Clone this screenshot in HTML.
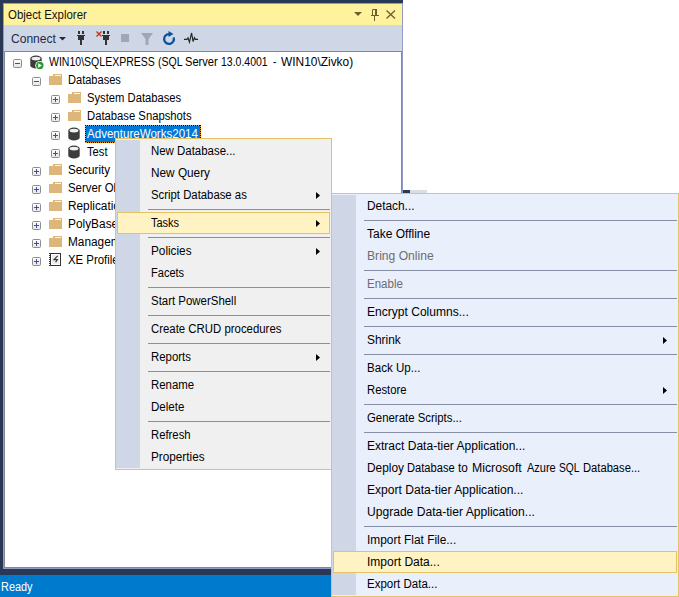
<!DOCTYPE html>
<html><head><meta charset="utf-8"><style>
html,body{margin:0;padding:0;width:679px;height:597px;overflow:hidden;background:#fff;position:relative}
.t{position:absolute;font-family:"Liberation Sans", sans-serif;font-size:12px;line-height:18px;white-space:pre}
svg{display:block}
</style></head><body>
<div style="position:absolute;left:0;top:0;width:403px;height:575px;background:#293955"></div>
<div style="position:absolute;left:3px;top:3px;width:400px;height:566px;background:#909CC6"></div>
<div style="position:absolute;left:4px;top:4px;width:398px;height:21px;background:#FFF29D"></div>
<div class="t" style="left:8px;top:6px;color:#141414;transform:scaleX(0.9530);transform-origin:0 0;">Object Explorer</div>
<svg style="position:absolute;left:354px;top:11px" width="9" height="6"><path d="M0,1 H8 L4,5 Z" fill="#6F5B34"/></svg>
<svg style="position:absolute;left:371px;top:9px" width="8" height="12"><path d="M1.5,0.5 H5.5 V6" stroke="#6F5B34" stroke-width="1" fill="none"/><path d="M1.5,0.5 V6" stroke="#6F5B34" stroke-width="1" fill="none"/><rect x="4" y="0" width="2" height="6" fill="#6F5B34"/><rect x="0" y="6" width="8" height="1" fill="#6F5B34"/><rect x="3" y="7" width="1" height="5" fill="#6F5B34"/></svg>
<svg style="position:absolute;left:386px;top:10px" width="10" height="9"><path d="M0.5,0.5 L9,8.5 M9,0.5 L0.5,8.5" stroke="#6F5B34" stroke-width="1.3" fill="none"/></svg>
<div style="position:absolute;left:4px;top:25px;width:398px;height:26px;background:#CFD6E5"></div>
<div class="t" style="left:11px;top:30px;color:#1E2A48;transform:scaleX(1.0045);transform-origin:0 0;">Connect</div>
<svg style="position:absolute;left:59px;top:37px" width="7" height="4"><path d="M0,0 H7 L3.5,3.5 Z" fill="#1E2A48"/></svg>
<svg style="position:absolute;left:77px;top:31px" width="9" height="14"><path d="M1,0 h2 v3 h-2 z M5,0 h2 v3 h-2 z M0,4 h8 v1 h-1 v4 h-2 v5 h-2 v-5 h-2 v-4 h-1 z" fill="#333"/></svg>
<svg style="position:absolute;left:102px;top:31px" width="9" height="14"><path d="M1,0 h2 v3 h-2 z M5,0 h2 v3 h-2 z M0,4 h8 v1 h-1 v4 h-2 v5 h-2 v-5 h-2 v-4 h-1 z" fill="#333"/></svg>
<svg style="position:absolute;left:96px;top:31px" width="7" height="7"><path d="M0.5,0.5 L5.5,5.5 M5.5,0.5 L0.5,5.5" stroke="#C4321A" stroke-width="1.3"/></svg>
<div style="position:absolute;left:121px;top:34px;width:8px;height:8px;background:#A1A6B3"></div>
<svg style="position:absolute;left:141px;top:33px" width="13" height="13"><path d="M0,0 H12 L7.5,6 V12 H4.5 V6 Z" fill="#A1A6B3"/></svg>
<svg style="position:absolute;left:162px;top:31px" width="15" height="15"><path d="M7,3.1 A4.9,4.9 0 1 0 11.6,6.3" stroke="#0A539E" stroke-width="2.3" fill="none"/><path d="M6.5,0 L11.5,3 L6.5,6 Z" fill="#0A539E"/></svg>
<svg style="position:absolute;left:184px;top:32px" width="15" height="12"><path d="M0,7.3 H3 L4,5.8 L5.4,10.2 L7.6,1 L9.1,9.6 L10.4,5.6 L11.4,7.3 H14" stroke="#262626" stroke-width="1.15" fill="none"/></svg>
<div style="position:absolute;left:4px;top:51px;width:398px;height:517px;background:#80889A"></div>
<div style="position:absolute;left:5px;top:52px;width:396px;height:515px;background:#FFFFFF"></div>
<svg style="position:absolute;left:13px;top:59px" width="9" height="9"><defs><linearGradient id="g" x1="0" y1="0" x2="0" y2="1"><stop offset="0" stop-color="#fff"/><stop offset="1" stop-color="#E4E4E4"/></linearGradient></defs><rect x="0.5" y="0.5" width="8" height="8" rx="1" fill="url(#g)" stroke="#8C8C8C"/><path d="M2,4.5 H7" stroke="#3B4FA2" stroke-width="1"/></svg>
<svg style="position:absolute;left:30px;top:55px" width="15" height="15"><path d="M0.3,3.5 V10.5 A5.7,3 0 0 0 11.7,10.5 V3.5 A5.7,3 0 0 0 0.3,3.5 Z" fill="#3C3C3C"/><ellipse cx="6" cy="3.6" rx="4.5" ry="1.9" fill="#F0F0F0"/><circle cx="9.8" cy="10.5" r="4.6" fill="#fff"/><circle cx="9.8" cy="10.5" r="3.7" fill="#23992A"/><path d="M8.2,8.3 L12,10.5 L8.2,12.7 Z" fill="#fff"/></svg>
<div class="t" style="left:49.10px;top:53px;color:#000;transform:scaleX(0.8767);transform-origin:0 0">WIN10\SQLEXPRESS</div>
<div class="t" style="left:157.62px;top:53px;color:#000;transform:scaleX(0.8778);transform-origin:0 0">(SQL</div>
<div class="t" style="left:185.37px;top:53px;color:#000;transform:scaleX(0.9265);transform-origin:0 0">Server</div>
<div class="t" style="left:221.03px;top:53px;color:#000;transform:scaleX(0.8731);transform-origin:0 0">13.0.4001</div>
<div class="t" style="left:272.80px;top:53px;color:#000;transform:scaleX(0.8250);transform-origin:0 0">-</div>
<div class="t" style="left:280.70px;top:53px;color:#000;transform:scaleX(0.9931);transform-origin:0 0">WIN10\Zivko)</div>
<svg style="position:absolute;left:32px;top:77px" width="9" height="9"><defs><linearGradient id="g" x1="0" y1="0" x2="0" y2="1"><stop offset="0" stop-color="#fff"/><stop offset="1" stop-color="#E4E4E4"/></linearGradient></defs><rect x="0.5" y="0.5" width="8" height="8" rx="1" fill="url(#g)" stroke="#8C8C8C"/><path d="M2,4.5 H7" stroke="#3B4FA2" stroke-width="1"/></svg>
<svg style="position:absolute;left:49px;top:74px" width="13" height="11"><path d="M4,0 H13 V11 H0 V2 H4 Z" fill="#DCB67A"/><path d="M6,1.5 H12" stroke="#FFF6E6" stroke-width="1"/></svg>
<div class="t" style="left:68px;top:71px;color:#000;transform:scaleX(0.9214);transform-origin:0 0;">Databases</div>
<svg style="position:absolute;left:51px;top:95px" width="9" height="9"><defs><linearGradient id="g" x1="0" y1="0" x2="0" y2="1"><stop offset="0" stop-color="#fff"/><stop offset="1" stop-color="#E4E4E4"/></linearGradient></defs><rect x="0.5" y="0.5" width="8" height="8" rx="1" fill="url(#g)" stroke="#8C8C8C"/><path d="M2,4.5 H7 M4.5,2 V7" stroke="#3B4FA2" stroke-width="1"/></svg>
<svg style="position:absolute;left:68px;top:92px" width="13" height="11"><path d="M4,0 H13 V11 H0 V2 H4 Z" fill="#DCB67A"/><path d="M6,1.5 H12" stroke="#FFF6E6" stroke-width="1"/></svg>
<div class="t" style="left:87px;top:89px;color:#000;transform:scaleX(0.9354);transform-origin:0 0;">System Databases</div>
<svg style="position:absolute;left:51px;top:113px" width="9" height="9"><defs><linearGradient id="g" x1="0" y1="0" x2="0" y2="1"><stop offset="0" stop-color="#fff"/><stop offset="1" stop-color="#E4E4E4"/></linearGradient></defs><rect x="0.5" y="0.5" width="8" height="8" rx="1" fill="url(#g)" stroke="#8C8C8C"/><path d="M2,4.5 H7 M4.5,2 V7" stroke="#3B4FA2" stroke-width="1"/></svg>
<svg style="position:absolute;left:68px;top:110px" width="13" height="11"><path d="M4,0 H13 V11 H0 V2 H4 Z" fill="#DCB67A"/><path d="M6,1.5 H12" stroke="#FFF6E6" stroke-width="1"/></svg>
<div class="t" style="left:87px;top:107px;color:#000;transform:scaleX(0.9391);transform-origin:0 0;">Database Snapshots</div>
<svg style="position:absolute;left:51px;top:131px" width="9" height="9"><defs><linearGradient id="g" x1="0" y1="0" x2="0" y2="1"><stop offset="0" stop-color="#fff"/><stop offset="1" stop-color="#E4E4E4"/></linearGradient></defs><rect x="0.5" y="0.5" width="8" height="8" rx="1" fill="url(#g)" stroke="#8C8C8C"/><path d="M2,4.5 H7 M4.5,2 V7" stroke="#3B4FA2" stroke-width="1"/></svg>
<svg style="position:absolute;left:68px;top:127px" width="12" height="14"><path d="M0.3,3.5 V10.5 A5.7,3 0 0 0 11.7,10.5 V3.5 A5.7,3 0 0 0 0.3,3.5 Z" fill="#3C3C3C"/><ellipse cx="6" cy="3.6" rx="4.5" ry="1.9" fill="#F0F0F0"/></svg>
<div style="position:absolute;left:85px;top:125px;width:116px;height:18px;background:#0078D7"></div>
<div style="position:absolute;left:85px;top:125px;width:116px;height:1px;background:repeating-linear-gradient(90deg,#000 0 1px,#F7931E 1px 2px)"></div>
<div style="position:absolute;left:85px;top:142px;width:116px;height:1px;background:repeating-linear-gradient(90deg,#000 0 1px,#F7931E 1px 2px)"></div>
<div style="position:absolute;left:85px;top:125px;width:1px;height:18px;background:repeating-linear-gradient(180deg,#000 0 1px,#F7931E 1px 2px)"></div>
<div style="position:absolute;left:200px;top:125px;width:1px;height:18px;background:repeating-linear-gradient(180deg,#000 0 1px,#F7931E 1px 2px)"></div>
<div class="t" style="left:87px;top:125px;color:#FFFFFF;transform:scaleX(0.9635);transform-origin:0 0;">AdventureWorks2014</div>
<svg style="position:absolute;left:51px;top:149px" width="9" height="9"><defs><linearGradient id="g" x1="0" y1="0" x2="0" y2="1"><stop offset="0" stop-color="#fff"/><stop offset="1" stop-color="#E4E4E4"/></linearGradient></defs><rect x="0.5" y="0.5" width="8" height="8" rx="1" fill="url(#g)" stroke="#8C8C8C"/><path d="M2,4.5 H7 M4.5,2 V7" stroke="#3B4FA2" stroke-width="1"/></svg>
<svg style="position:absolute;left:68px;top:145px" width="12" height="14"><path d="M0.3,3.5 V10.5 A5.7,3 0 0 0 11.7,10.5 V3.5 A5.7,3 0 0 0 0.3,3.5 Z" fill="#3C3C3C"/><ellipse cx="6" cy="3.6" rx="4.5" ry="1.9" fill="#F0F0F0"/></svg>
<div class="t" style="left:87px;top:143px;color:#000;transform:scaleX(0.9318);transform-origin:0 0;">Test</div>
<svg style="position:absolute;left:32px;top:167px" width="9" height="9"><defs><linearGradient id="g" x1="0" y1="0" x2="0" y2="1"><stop offset="0" stop-color="#fff"/><stop offset="1" stop-color="#E4E4E4"/></linearGradient></defs><rect x="0.5" y="0.5" width="8" height="8" rx="1" fill="url(#g)" stroke="#8C8C8C"/><path d="M2,4.5 H7 M4.5,2 V7" stroke="#3B4FA2" stroke-width="1"/></svg>
<svg style="position:absolute;left:49px;top:164px" width="13" height="11"><path d="M4,0 H13 V11 H0 V2 H4 Z" fill="#DCB67A"/><path d="M6,1.5 H12" stroke="#FFF6E6" stroke-width="1"/></svg>
<div class="t" style="left:68px;top:161px;color:#000;transform:scaleX(0.9700);transform-origin:0 0;">Security</div>
<svg style="position:absolute;left:32px;top:185px" width="9" height="9"><defs><linearGradient id="g" x1="0" y1="0" x2="0" y2="1"><stop offset="0" stop-color="#fff"/><stop offset="1" stop-color="#E4E4E4"/></linearGradient></defs><rect x="0.5" y="0.5" width="8" height="8" rx="1" fill="url(#g)" stroke="#8C8C8C"/><path d="M2,4.5 H7 M4.5,2 V7" stroke="#3B4FA2" stroke-width="1"/></svg>
<svg style="position:absolute;left:49px;top:182px" width="13" height="11"><path d="M4,0 H13 V11 H0 V2 H4 Z" fill="#DCB67A"/><path d="M6,1.5 H12" stroke="#FFF6E6" stroke-width="1"/></svg>
<div class="t" style="left:68px;top:179px;color:#000;transform:scaleX(0.9500);transform-origin:0 0;">Server Objects</div>
<svg style="position:absolute;left:32px;top:203px" width="9" height="9"><defs><linearGradient id="g" x1="0" y1="0" x2="0" y2="1"><stop offset="0" stop-color="#fff"/><stop offset="1" stop-color="#E4E4E4"/></linearGradient></defs><rect x="0.5" y="0.5" width="8" height="8" rx="1" fill="url(#g)" stroke="#8C8C8C"/><path d="M2,4.5 H7 M4.5,2 V7" stroke="#3B4FA2" stroke-width="1"/></svg>
<svg style="position:absolute;left:49px;top:200px" width="13" height="11"><path d="M4,0 H13 V11 H0 V2 H4 Z" fill="#DCB67A"/><path d="M6,1.5 H12" stroke="#FFF6E6" stroke-width="1"/></svg>
<div class="t" style="left:68px;top:197px;color:#000;transform:scaleX(0.9850);transform-origin:0 0;">Replication</div>
<svg style="position:absolute;left:32px;top:221px" width="9" height="9"><defs><linearGradient id="g" x1="0" y1="0" x2="0" y2="1"><stop offset="0" stop-color="#fff"/><stop offset="1" stop-color="#E4E4E4"/></linearGradient></defs><rect x="0.5" y="0.5" width="8" height="8" rx="1" fill="url(#g)" stroke="#8C8C8C"/><path d="M2,4.5 H7 M4.5,2 V7" stroke="#3B4FA2" stroke-width="1"/></svg>
<svg style="position:absolute;left:49px;top:218px" width="13" height="11"><path d="M4,0 H13 V11 H0 V2 H4 Z" fill="#DCB67A"/><path d="M6,1.5 H12" stroke="#FFF6E6" stroke-width="1"/></svg>
<div class="t" style="left:68px;top:215px;color:#000;transform:scaleX(0.9900);transform-origin:0 0;">PolyBase</div>
<svg style="position:absolute;left:32px;top:239px" width="9" height="9"><defs><linearGradient id="g" x1="0" y1="0" x2="0" y2="1"><stop offset="0" stop-color="#fff"/><stop offset="1" stop-color="#E4E4E4"/></linearGradient></defs><rect x="0.5" y="0.5" width="8" height="8" rx="1" fill="url(#g)" stroke="#8C8C8C"/><path d="M2,4.5 H7 M4.5,2 V7" stroke="#3B4FA2" stroke-width="1"/></svg>
<svg style="position:absolute;left:49px;top:236px" width="13" height="11"><path d="M4,0 H13 V11 H0 V2 H4 Z" fill="#DCB67A"/><path d="M6,1.5 H12" stroke="#FFF6E6" stroke-width="1"/></svg>
<div class="t" style="left:68px;top:233px;color:#000;transform:scaleX(0.9850);transform-origin:0 0;">Management</div>
<svg style="position:absolute;left:32px;top:257px" width="9" height="9"><defs><linearGradient id="g" x1="0" y1="0" x2="0" y2="1"><stop offset="0" stop-color="#fff"/><stop offset="1" stop-color="#E4E4E4"/></linearGradient></defs><rect x="0.5" y="0.5" width="8" height="8" rx="1" fill="url(#g)" stroke="#8C8C8C"/><path d="M2,4.5 H7 M4.5,2 V7" stroke="#3B4FA2" stroke-width="1"/></svg>
<svg style="position:absolute;left:49px;top:253px" width="12" height="13"><rect x="1" y="0" width="11" height="13" fill="#333"/><rect x="2" y="1" width="9" height="11" fill="#fff"/><rect x="3" y="2" width="7" height="9" fill="#EDEDED"/><rect x="0" y="0" width="1" height="1" fill="#333"/><rect x="0" y="2" width="1" height="1" fill="#333"/><rect x="0" y="4" width="1" height="1" fill="#333"/><rect x="0" y="6" width="1" height="1" fill="#333"/><rect x="0" y="8" width="1" height="1" fill="#333"/><rect x="0" y="10" width="1" height="1" fill="#333"/><rect x="0" y="12" width="1" height="1" fill="#333"/><path d="M8.6,2.8 L5,6.6 H8.4 L6.6,9.2" stroke="#333" stroke-width="1.1" fill="none"/></svg>
<div class="t" style="left:68px;top:251px;color:#000;transform:scaleX(0.9500);transform-origin:0 0;">XE Profiler</div>
<div style="position:absolute;left:403px;top:190px;width:7px;height:3px;background:#293955"></div>
<div style="position:absolute;left:410px;top:190px;width:17px;height:3px;background:#DADDE4"></div>
<div style="position:absolute;left:0;top:575px;width:679px;height:22px;background:#007ACC"></div>
<div class="t" style="left:1px;top:578px;color:#FFFFFF;transform:scaleX(0.9088);transform-origin:0 0;">Ready</div>
<div style="position:absolute;left:115px;top:138px;width:215px;height:330px;border:1px solid #E5C365;background:#F0F0F0"></div>
<div style="position:absolute;left:116px;top:140px;width:24px;height:328px;background:#CFD6E5"></div>
<div class="t" style="left:151px;top:142px;color:#000;transform:scaleX(0.9529);transform-origin:0 0;">New Database...</div>
<div class="t" style="left:151px;top:164px;color:#000;transform:scaleX(0.9831);transform-origin:0 0;">New Query</div>
<div class="t" style="left:151px;top:186px;color:#000;transform:scaleX(0.9450);transform-origin:0 0;">Script Database as</div>
<svg style="position:absolute;left:316px;top:192px" width="5" height="8"><path d="M0,0 L4,3.5 L0,7 Z" fill="#000"/></svg>
<div style="position:absolute;left:148px;top:209px;width:182px;height:1px;background:#878FA6"></div>
<div style="position:absolute;left:117px;top:212px;width:211px;height:20px;border:1px solid #E5C365;background:#FFF3C4"></div>
<div class="t" style="left:151px;top:214px;color:#000;transform:scaleX(0.9167);transform-origin:0 0;">Tasks</div>
<svg style="position:absolute;left:316px;top:220px" width="5" height="8"><path d="M0,0 L4,3.5 L0,7 Z" fill="#000"/></svg>
<div style="position:absolute;left:148px;top:237px;width:182px;height:1px;background:#878FA6"></div>
<div class="t" style="left:151px;top:242px;color:#000;transform:scaleX(0.9800);transform-origin:0 0;">Policies</div>
<svg style="position:absolute;left:316px;top:248px" width="5" height="8"><path d="M0,0 L4,3.5 L0,7 Z" fill="#000"/></svg>
<div class="t" style="left:151px;top:264px;color:#000;transform:scaleX(0.9200);transform-origin:0 0;">Facets</div>
<div style="position:absolute;left:148px;top:287px;width:182px;height:1px;background:#878FA6"></div>
<div class="t" style="left:151px;top:292px;color:#000;transform:scaleX(0.9534);transform-origin:0 0;">Start PowerShell</div>
<div style="position:absolute;left:148px;top:315px;width:182px;height:1px;background:#878FA6"></div>
<div class="t" style="left:151px;top:320px;color:#000;transform:scaleX(0.9493);transform-origin:0 0;">Create CRUD procedures</div>
<div style="position:absolute;left:148px;top:343px;width:182px;height:1px;background:#878FA6"></div>
<div class="t" style="left:151px;top:348px;color:#000;transform:scaleX(0.9488);transform-origin:0 0;">Reports</div>
<svg style="position:absolute;left:316px;top:354px" width="5" height="8"><path d="M0,0 L4,3.5 L0,7 Z" fill="#000"/></svg>
<div style="position:absolute;left:148px;top:371px;width:182px;height:1px;background:#878FA6"></div>
<div class="t" style="left:151px;top:376px;color:#000;transform:scaleX(0.9523);transform-origin:0 0;">Rename</div>
<div class="t" style="left:151px;top:398px;color:#000;transform:scaleX(0.9606);transform-origin:0 0;">Delete</div>
<div style="position:absolute;left:148px;top:421px;width:182px;height:1px;background:#878FA6"></div>
<div class="t" style="left:151px;top:426px;color:#000;transform:scaleX(0.9425);transform-origin:0 0;">Refresh</div>
<div class="t" style="left:151px;top:448px;color:#000;transform:scaleX(0.9792);transform-origin:0 0;">Properties</div>
<div style="position:absolute;left:331px;top:193px;width:346px;height:402px;border:1px solid #E5C365;background:#EAEFFC"></div>
<div style="position:absolute;left:332px;top:195px;width:24px;height:400px;background:#CFD6E5"></div>
<div class="t" style="left:367px;top:197px;color:#000;transform:scaleX(0.9891);transform-origin:0 0;">Detach...</div>
<div style="position:absolute;left:364px;top:220px;width:313px;height:1px;background:#878FA6"></div>
<div class="t" style="left:367px;top:225px;color:#000;transform:scaleX(1.0000);transform-origin:0 0;">Take Offline</div>
<div class="t" style="left:367px;top:247px;color:#6D6D6D;transform:scaleX(1.0108);transform-origin:0 0;">Bring Online</div>
<div style="position:absolute;left:364px;top:270px;width:313px;height:1px;background:#878FA6"></div>
<div class="t" style="left:367px;top:275px;color:#6D6D6D;transform:scaleX(0.9611);transform-origin:0 0;">Enable</div>
<div style="position:absolute;left:364px;top:298px;width:313px;height:1px;background:#878FA6"></div>
<div class="t" style="left:367px;top:303px;color:#000;transform:scaleX(1.0040);transform-origin:0 0;">Encrypt Columns...</div>
<div style="position:absolute;left:364px;top:326px;width:313px;height:1px;background:#878FA6"></div>
<div class="t" style="left:367px;top:331px;color:#000;transform:scaleX(0.9909);transform-origin:0 0;">Shrink</div>
<svg style="position:absolute;left:663px;top:337px" width="5" height="8"><path d="M0,0 L4,3.5 L0,7 Z" fill="#000"/></svg>
<div style="position:absolute;left:364px;top:354px;width:313px;height:1px;background:#878FA6"></div>
<div class="t" style="left:367px;top:359px;color:#000;transform:scaleX(0.9642);transform-origin:0 0;">Back Up...</div>
<div class="t" style="left:367px;top:381px;color:#000;transform:scaleX(0.9415);transform-origin:0 0;">Restore</div>
<svg style="position:absolute;left:663px;top:387px" width="5" height="8"><path d="M0,0 L4,3.5 L0,7 Z" fill="#000"/></svg>
<div style="position:absolute;left:364px;top:404px;width:313px;height:1px;background:#878FA6"></div>
<div class="t" style="left:367px;top:409px;color:#000;transform:scaleX(0.9490);transform-origin:0 0;">Generate Scripts...</div>
<div style="position:absolute;left:364px;top:432px;width:313px;height:1px;background:#878FA6"></div>
<div class="t" style="left:367px;top:437px;color:#000;transform:scaleX(1.0019);transform-origin:0 0;">Extract Data-tier Application...</div>
<div class="t" style="left:366.71px;top:459px;color:#000;transform:scaleX(0.9889);transform-origin:0 0">Deploy</div>
<div class="t" style="left:406.77px;top:459px;color:#000;transform:scaleX(0.9280);transform-origin:0 0">Database</div>
<div class="t" style="left:458.20px;top:459px;color:#000;transform:scaleX(0.9800);transform-origin:0 0">to</div>
<div class="t" style="left:472.18px;top:459px;color:#000;transform:scaleX(1.0208);transform-origin:0 0">Microsoft</div>
<div class="t" style="left:526.90px;top:459px;color:#000;transform:scaleX(0.9161);transform-origin:0 0">Azure</div>
<div class="t" style="left:559.05px;top:459px;color:#000;transform:scaleX(0.8522);transform-origin:0 0">SQL</div>
<div class="t" style="left:583.17px;top:459px;color:#000;transform:scaleX(0.9322);transform-origin:0 0">Database...</div>
<div class="t" style="left:367px;top:481px;color:#000;transform:scaleX(1.0065);transform-origin:0 0;">Export Data-tier Application...</div>
<div class="t" style="left:367px;top:503px;color:#000;transform:scaleX(1.0067);transform-origin:0 0;">Upgrade Data-tier Application...</div>
<div style="position:absolute;left:364px;top:526px;width:313px;height:1px;background:#878FA6"></div>
<div class="t" style="left:367px;top:531px;color:#000;transform:scaleX(0.9909);transform-origin:0 0;">Import Flat File...</div>
<div style="position:absolute;left:333px;top:551px;width:342px;height:20px;border:1px solid #E5C365;background:#FFF3C4"></div>
<div class="t" style="left:367px;top:553px;color:#000;transform:scaleX(1.0014);transform-origin:0 0;">Import Data...</div>
<div class="t" style="left:367px;top:575px;color:#000;transform:scaleX(0.9592);transform-origin:0 0;">Export Data...</div>
</body></html>
